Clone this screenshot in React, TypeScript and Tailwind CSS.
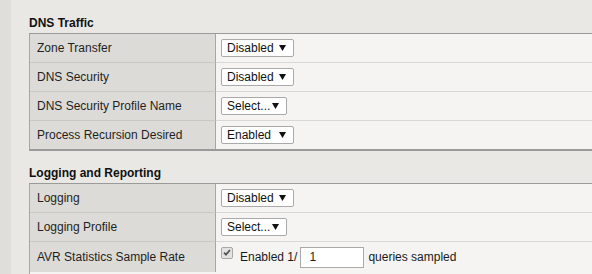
import React from 'react'

type Row = { label: string; control: React.ReactNode; tall?: boolean }

function Select({ value, width }: { value: string; width: string }) {
  return (
    <div
      className={`flex h-[18px] items-center justify-between rounded-[2px] border border-[#a9a9a9] bg-white pl-[5px] pr-[7px] text-[12px] leading-[14px] text-[#111] ${width}`}
    >
      <span>{value}</span>
      <svg width="7" height="6" viewBox="0 0 7 6">
        <path d="M0 0h7L3.5 6z" fill="#111" />
      </svg>
    </div>
  )
}

function SampleRate() {
  return (
    <div className="flex items-center text-[12px] leading-[14px] text-[#1a1a1a]">
      {/* greyed-out checkbox */}
      <span className="mb-[9px] flex h-[12px] w-[12px] items-center justify-center rounded-[2px] border border-[#a8a8a8] bg-[#e3e3e3]">
        <svg width="8" height="7" viewBox="0 0 8 7">
          <path d="M1 3.6 3 5.6 7 1" fill="none" stroke="#555" strokeWidth="1.8" />
        </svg>
      </span>
      <span className="ml-[7px]">Enabled 1/</span>
      <div className="ml-[3px] flex h-[21px] w-[64px] items-center border border-[#a9a9a9] bg-white pl-[8px]">
        1
      </div>
      <span className="ml-[4px]">queries sampled</span>
    </div>
  )
}

function Section({ title, rows, className = '' }: { title: string; rows: Row[]; className?: string }) {
  return (
    <section className={className}>
      <h2 className="pb-[3px] text-[12px] font-bold leading-[14px] text-[#111]">{title}</h2>
      <div className="border-t border-b-2 border-l border-t-[#9a9a9a] border-b-[#9a9a9a] border-l-[#a6a6a6]">
        {rows.map((row, i) => {
          const last = i === rows.length - 1
          const height = row.tall ? 'h-[32px] pb-[2px]' : last ? 'h-[28px]' : 'h-[29px]'
          return (
            <div key={row.label} className={`flex ${height} ${row.tall ? 'bg-[#f5f4f2]' : ''}`}>
              <div
                className={`flex w-[186px] items-center border-r border-r-[#a6a6a6] bg-[#dcdbd7] pl-[7px] text-[12px] leading-[14px] text-[#1f1f1f] ${
                  last ? '' : 'border-b border-b-[#c9c8c4]'
                }`}
              >
                {row.label}
              </div>
              <div className={`flex flex-1 items-center bg-[#f5f4f2] pl-[5px] ${last ? '' : 'border-b border-b-[#d8d8d6]'}`}>
                {row.control}
              </div>
            </div>
          )
        })}
      </div>
    </section>
  )
}

export default function App() {
  const dns: Row[] = [
    { label: 'Zone Transfer', control: <Select value="Disabled" width="w-[73px]" /> },
    { label: 'DNS Security', control: <Select value="Disabled" width="w-[73px]" /> },
    { label: 'DNS Security Profile Name', control: <Select value="Select..." width="w-[66px]" /> },
    { label: 'Process Recursion Desired', control: <Select value="Enabled" width="w-[73px]" /> },
  ]
  const logging: Row[] = [
    { label: 'Logging', control: <Select value="Disabled" width="w-[73px]" /> },
    { label: 'Logging Profile', control: <Select value="Select..." width="w-[66px]" /> },
    { label: 'AVR Statistics Sample Rate', control: <SampleRate />, tall: true },
  ]

  return (
    <div className="flex h-[274px] w-[592px] overflow-hidden bg-[#e9e8e4] font-['Liberation_Sans',Arial,sans-serif]">
      <div className="w-[11px] shrink-0 bg-[#dfdedb]" />
      <div className="flex-1 pl-[18px] pt-[16px]">
        <Section title="DNS Traffic" rows={dns} />
        <Section title="Logging and Reporting" rows={logging} className="mt-[15px]" />
      </div>
    </div>
  )
}
